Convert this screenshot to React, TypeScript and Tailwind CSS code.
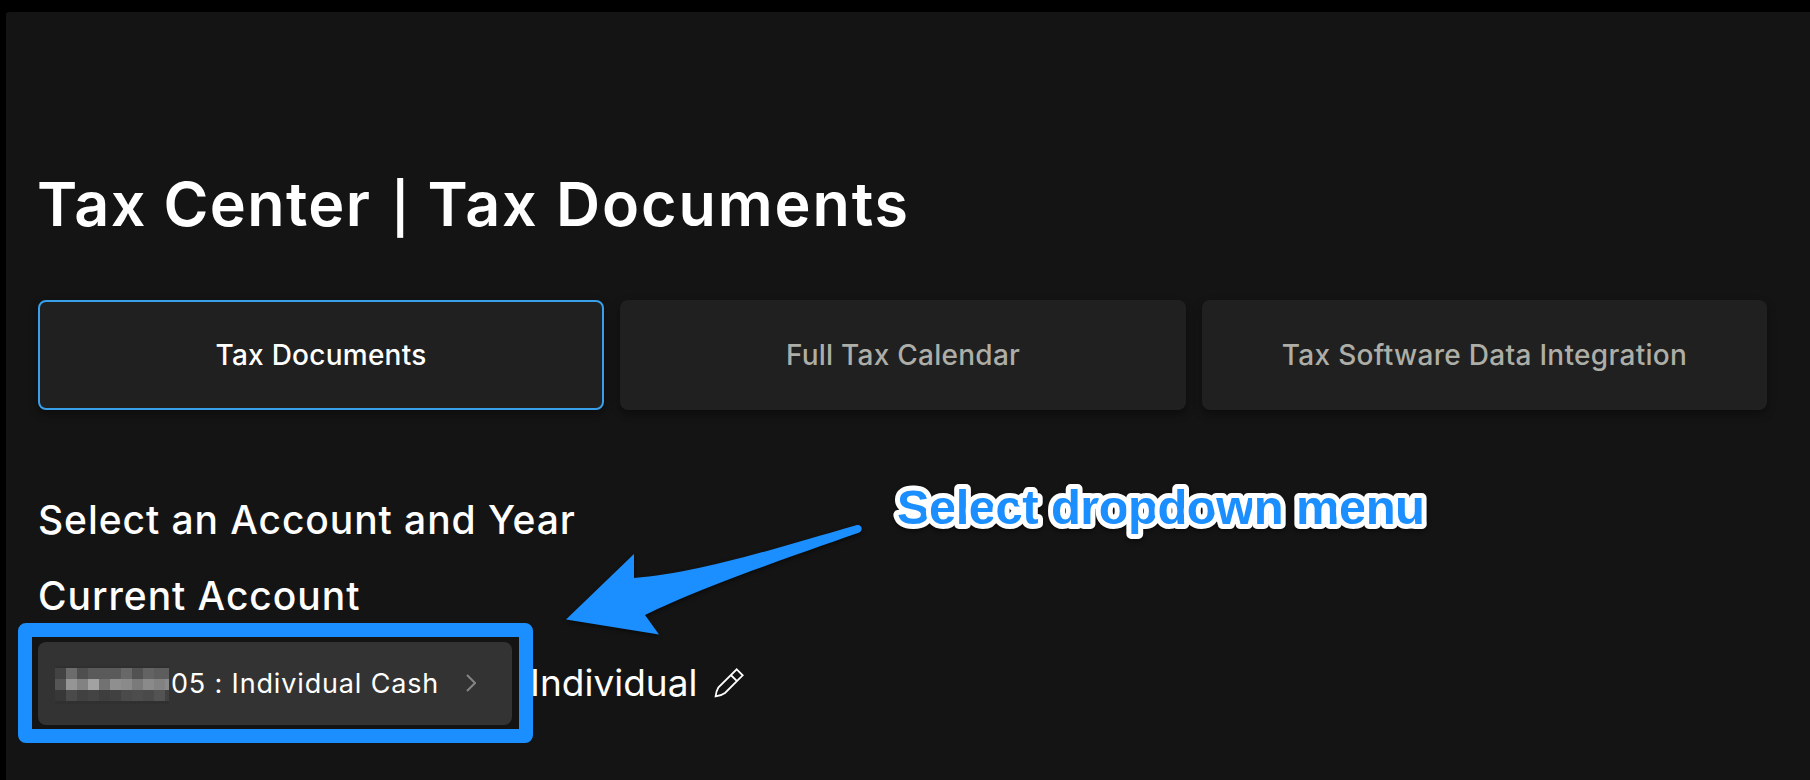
import { clsx } from "clsx";

const tabs = [
  { label: "Tax Documents", active: true, size: "w-[566px] tracking-[0.25px]" },
  { label: "Full Tax Calendar", active: false, size: "w-[566px] tracking-[0.25px]" },
  { label: "Tax Software Data Integration", active: false, size: "w-[565px] tracking-[0.3px]" },
];

// Greys of the redacted account number, one entry per block.
const mosaic = [
  ["#2f2f2f", "#2f2f2f", "#2f2f2f", "#2f2f2f", "#2f2f2f", "#2f2f2f", "#2f2f2f", "#2f2f2f", "#2f2f2f", "#2f2f2f", "#2f2f2f"],
  ["#434343", "#6c6c6c", "#4f4f4f", "#5a5a5a", "#5a5a5a", "#5a5a5a", "#686868", "#525252", "#636363", "#5d5d5d", "#5d5d5d"],
  ["#555555", "#959595", "#828282", "#a2a2a2", "#727272", "#8f8f8f", "#8a8a8a", "#7a7a7a", "#8a8a8a", "#828282", "#8a8a8a"],
  ["#373737", "#4a4a4a", "#414141", "#444444", "#3e3e3e", "#414141", "#4a4a4a", "#4d4d4d", "#4a4a4a", "#535353", "#414141"],
  ["#303030", "#303030", "#303030", "#303030", "#303030", "#303030", "#303030", "#303030", "#303030", "#303030", "#303030"],
];
const mosaicRows = ["h-[2px]", "h-[11px]", "h-[11px]", "h-[11px]", "h-[3px]"];

function Mosaic() {
  return (
    <div className="w-[114px] shrink-0 overflow-hidden">
      {mosaic.map((row, i) => (
        <div key={i} className={clsx("flex", mosaicRows[i])}>
          {row.map((color, j) => (
            <span key={j} className="h-full w-[11px] shrink-0 last:w-[4px]" style={{ backgroundColor: color }} />
          ))}
        </div>
      ))}
    </div>
  );
}

function PencilIcon() {
  return (
    <svg width="30" height="30" viewBox="0 0 30 30" fill="none" stroke="#fff" strokeWidth="1.8">
      <path d="M22.7 1.3 L28.7 7.3 L11 25 Q7.5 27.6 1.6 28.4 Q2.2 23 4.5 19.3 Z M16.8 7 L23 13.2" />
    </svg>
  );
}

export default function App() {
  return (
    <div className="h-[780px] w-[1810px] overflow-hidden bg-black pt-3 pl-1.5 font-['Inter',sans-serif] font-medium text-white">
      <main className="relative h-[768px] rounded-tl-[3px] bg-[#141414] pt-[151px] pl-8">
        <h1 className="-ml-px flex h-[83px] items-baseline text-[61px] leading-[83px] font-semibold whitespace-pre">
          <span className="tracking-[1.4px]">Tax Center </span>
          <span className="ml-[3px] text-[50px] tracking-[1px]">|</span>
          <span className="tracking-[1.9px]"> Tax Documents</span>
        </h1>

        <div className="mt-[54px] flex gap-4">
          {tabs.map((tab) => (
            <button
              key={tab.label}
              type="button"
              className={clsx(
                "h-[110px] rounded-lg border-2 bg-[#202020] text-[28px] whitespace-nowrap shadow-[0_4px_8px_rgba(0,0,0,0.4)]",
                tab.size,
                tab.active ? "border-[#389fe8] text-white" : "border-transparent text-[#adaea7]"
              )}
            >
              {tab.label}
            </button>
          ))}
        </div>

        <h2 className="mt-[84px] h-[52px] text-[39px] leading-[52px] tracking-[0.92px] whitespace-nowrap">
          Select an Account and Year
        </h2>
        <h3 className="mt-[24px] h-[52px] text-[39px] leading-[52px] tracking-[0.95px] whitespace-nowrap">Current Account</h3>

        <div className="mt-[20px] flex items-center">
          <button
            type="button"
            className="flex h-[83px] w-[474px] items-center rounded-lg bg-[#333] pt-[2px] pl-[17px] text-[27px] font-normal tracking-[0.84px] whitespace-nowrap"
          >
            <Mosaic />
            <span className="ml-[2px]">05 : Individual Cash</span>
            <svg className="mb-[3px] ml-[27px]" width="10" height="18" viewBox="0 0 10 18" fill="none" stroke="#858585" strokeWidth="2">
              <path d="M1 1 L9 9 L1 17" />
            </svg>
          </button>
          <span className="mb-[2px] ml-[18px] text-[37px] font-normal">Individual</span>
          <span className="mb-[2px] ml-[17px]">
            <PencilIcon />
          </span>
        </div>

        {/* annotations over the page */}
        <div className="absolute top-[611px] left-[12px] h-[120px] w-[515px] rounded-lg border-[14px] border-[#1b8fff]" />
        <svg className="absolute top-[508px] left-[554px] drop-shadow-[0_2px_2px_rgba(0,0,0,0.5)]" width="310" height="120" viewBox="0 0 310 120">
          <path d="M6 99.5 L74 34 V58 C136 54 224 26 297 5 C302 4 304 11 298 13 C232 36 140 68 85 95 L99 114.5 Z" fill="#1b8fff" />
        </svg>
        <svg className="absolute top-[462px] left-[880px] drop-shadow-[0_2px_2px_rgba(0,0,0,0.5)]" width="560" height="80">
          <text
            x="11"
            y="49.5"
            textLength="528"
            className="fill-[#1b8fff] stroke-white font-['Liberation_Sans',sans-serif] text-[49px] font-bold"
            strokeWidth="10"
            strokeLinejoin="round"
            paintOrder="stroke"
          >
            Select dropdown menu
          </text>
        </svg>
      </main>
    </div>
  );
}
